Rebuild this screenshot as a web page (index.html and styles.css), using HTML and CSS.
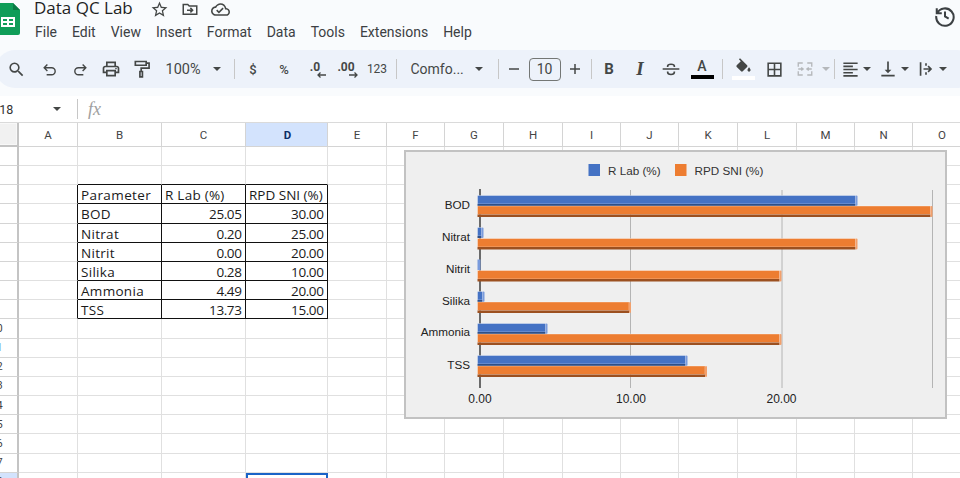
FILE: index.html
```html
<!DOCTYPE html>
<html lang="en">
<head>
<meta charset="utf-8">
<title>Data QC Lab</title>
<link rel="stylesheet" href="styles.css">
</head>
<body>
<div class="chrome">
  <header class="top">
    <svg class="logo" width="20" height="33" viewBox="0 3 20 33"><path class="logo-g" d="M0 3H13L20 10V33a2 2 0 0 1-2 2H0Z"/><path class="logo-f" d="M13 3L20 10H13Z"/><path class="logo-w" d="M1 17H15V27H1ZM3 19V21H7V19ZM9 19V21H13V19ZM3 23V25H7V23ZM9 23V25H13V23Z" fill-rule="evenodd"/></svg>
    <div class="heads">
      <div class="title-row">
        <span class="title">Data QC Lab</span>
        <svg class="ti star" width="19" height="19" viewBox="0 0 24 24"><path d="M22 9.24l-7.19-.62L12 2 9.19 8.63 2 9.24l5.46 4.73L5.82 21 12 17.27 18.18 21l-1.63-7.03L22 9.24zM12 15.4l-3.76 2.27 1-4.28-3.32-2.88 4.38-.38L12 6.1l1.71 4.04 4.38.38-3.32 2.88 1 4.28L12 15.4z"/></svg>
        <svg class="ti folder" width="18" height="18" viewBox="0 0 24 24"><path class="st" d="M3 6h6l2 2h10v11H3ZM8 13.500h7M12.500 10.500l3 3-3 3"/></svg>
        <svg class="ti cloud" width="19" height="19" viewBox="0 0 24 24"><path d="M19.35 10.040C18.670 6.590 15.640 4 12 4 9.110 4 6.600 5.640 5.350 8.040 2.340 8.360 0 10.910 0 14c0 3.310 2.690 6 6 6h13c2.760 0 5-2.240 5-5 0-2.640-2.050-4.780-4.650-4.960zM19 18H6c-2.210 0-4-1.790-4-4 0-2.050 1.530-3.760 3.560-3.970l1.070-.11.5-.95C8.080 7.140 9.940 6 12 6c2.620 0 4.880 1.860 5.390 4.430l.3 1.500 1.530.11c1.560.1 2.780 1.410 2.780 2.960 0 1.650-1.350 3-3 3zm-9-3.820l-2.090-2.090L6.500 13.500 10 17l6.010-6.010-1.410-1.410z"/></svg>
      </div>
      <nav class="menu">
        <span>File</span><span>Edit</span><span>View</span><span>Insert</span><span>Format</span><span>Data</span><span>Tools</span><span>Extensions</span><span>Help</span>
      </nav>
    </div>
    <svg class="history" width="22" height="22" viewBox="0 0 24 24"><path class="st thick" d="M3 3.500V9h5.500M3.400 9A9.500 9.500 0 1 1 2.500 12M12 7v5.500l4 2.400"/></svg>
  </header>

  <div class="toolbar">
    <button class="b first"><svg width="19" height="19" viewBox="0 0 24 24"><path d="M15.500 14h-.79l-.28-.27A6.471 6.471 0 0 0 16 9.500 6.500 6.500 0 1 0 9.500 16c1.610 0 3.090-.59 4.230-1.570l.27.28v.79l5 4.990L20.490 19l-4.990-5zm-6 0C7.010 14 5 11.990 5 9.500S7.010 5 9.500 5 14 7.010 14 9.500 11.990 14 9.500 14z"/></svg></button>
    <button class="b"><svg width="17" height="17" viewBox="0 0 24 24"><path class="st" d="M9 5L4.500 9.500 9 14M4.500 9.500H15a5 5 0 0 1 0 10H8"/></svg></button>
    <button class="b"><svg width="17" height="17" viewBox="0 0 24 24"><path class="st" d="M15 5l4.500 4.500L15 14M19.500 9.500H9a5 5 0 0 0 0 10h7"/></svg></button>
    <button class="b"><svg width="20" height="20" viewBox="0 0 24 24"><path d="M19 8h-1V3H6v5H5c-1.660 0-3 1.340-3 3v6h4v4h12v-4h4v-6c0-1.660-1.340-3-3-3zM8 5h8v3H8V5zm8 14H8v-4h8v4zm2-4v-2H6v2H4v-4c0-.55.45-1 1-1h14c.55 0 1 .45 1 1v4h-2z"/><circle cx="18" cy="11.500" r="1"/></svg></button>
    <button class="b"><svg width="20" height="20" viewBox="0 0 24 24"><path class="st" d="M4 3h13v4.500H4ZM17 5h3.500v6H11v4M9.500 15h3v6.500h-3Z"/></svg></button>
    <div class="dd zoom"><span>100%</span><i class="caret"></i></div>
    <i class="sep s1"></i>
    <button class="b t">$</button>
    <button class="b t">%</button>
    <button class="b dec"><span>.0</span><svg class="arr a0" width="9" height="6" viewBox="0 0 9 6"><path class="st thin" d="M9 3H1M3.500 .5L1 3 3.500 5.500"/></svg></button>
    <button class="b dec"><span>.00</span><svg class="arr a00" width="9" height="6" viewBox="0 0 9 6"><path class="st thin" d="M0 3H8M5.500 .5L8 3 5.500 5.500"/></svg></button>
    <button class="b t small">123</button>
    <i class="sep s2"></i>
    <div class="dd font"><span>Comfo...</span><i class="caret"></i></div>
    <i class="sep s3"></i>
    <button class="b minus"><svg width="14" height="14" viewBox="0 0 14 14"><path class="st mid" d="M2 7H12"/></svg></button>
    <div class="size">10</div>
    <button class="b plus"><svg width="14" height="14" viewBox="0 0 14 14"><path class="st mid" d="M2 7H12M7 2V12"/></svg></button>
    <i class="sep s4"></i>
    <button class="b bold">B</button>
    <button class="b ital">I</button>
    <button class="b"><svg width="20" height="20" viewBox="0 0 24 24"><path class="st" d="M2 12H22M8 9.500V8.500C8 5.500 16 5.500 16 8.500V9.500M8 15V16C8 19.500 16 19.500 16 16V15"/></svg></button>
    <button class="b color"><span>A</span><i class="bar"></i></button>
    <i class="sep s5"></i>
    <button class="b fill"><svg width="19" height="17" viewBox="0 0 24 21"><path d="M16.560 8.940L7.620 0 6.210 1.410l2.380 2.380-5.150 5.150c-.59.59-.59 1.540 0 2.120l5.500 5.500c.29.29.68.44 1.060.44s.77-.15 1.060-.44l5.500-5.500c.59-.58.59-1.530 0-2.120zM19 11.500s-2 2.170-2 3.500c0 1.100.9 2 2 2s2-.9 2-2c0-1.330-2-3.500-2-3.500z"/></svg><i class="bar white"></i></button>
    <button class="b"><svg width="19" height="19" viewBox="0 0 24 24"><path d="M3 3v18h18V3H3zm8 16H5v-6h6v6zm0-8H5V5h6v6zm8 8h-6v-6h6v6zm0-8h-6V5h6v6z"/></svg></button>
    <button class="b merge"><svg width="18" height="18" viewBox="0 0 24 24"><path class="st gray" d="M3 9V4H9M21 9V4H15M3 15V20H9M21 15V20H15M3 12H9M7 10L9.500 12 7 14M21 12H15M17 10L14.500 12 17 14"/></svg></button>
    <i class="caret light"></i>
    <i class="sep s6"></i>
    <div class="dd tool a1"><svg width="19" height="19" viewBox="0 0 24 24"><path d="M15 15H3v2h12v-2zm0-8H3v2h12V7zM3 13h18v-2H3v2zm0 8h18v-2H3v2zM3 3v2h18V3H3z"/></svg><i class="caret"></i></div>
    <div class="dd tool a2"><svg width="20" height="20" viewBox="0 0 24 24"><path d="M16 13h-3V3h-2v10H8l4 4 4-4zM4 19v2h16v-2H4z"/></svg><i class="caret"></i></div>
    <div class="dd tool a2"><svg width="20" height="20" viewBox="0 0 24 24"><path class="st" d="M5.500 4V20M9 12H18M14.500 8.500L18 12 14.500 15.500M12 5V8M12 16V19"/></svg><i class="caret"></i></div>
  </div>
</div>

<div class="formula">
  <div class="namebox"><span>D18</span><i class="caret"></i></div>
  <i class="sep fsep"></i>
  <span class="fx">fx</span>
</div>

<main class="sheet">
  <div class="h corner"></div><div class="h">A</div><div class="h">B</div><div class="h">C</div><div class="h on">D</div><div class="h">E</div><div class="h">F</div><div class="h">G</div><div class="h">H</div><div class="h">I</div><div class="h">J</div><div class="h">K</div><div class="h">L</div><div class="h">M</div><div class="h">N</div><div class="h">O</div>

  <div class="r">1</div><div class="c"></div><div class="c"></div><div class="c"></div><div class="c"></div><div class="c"></div><div class="c"></div><div class="c"></div><div class="c"></div><div class="c"></div><div class="c"></div><div class="c"></div><div class="c"></div><div class="c"></div><div class="c"></div><div class="c"></div>
  <div class="r">2</div><div class="c"></div><div class="c bb"></div><div class="c bb"></div><div class="c bb"></div><div class="c"></div><div class="c"></div><div class="c"></div><div class="c"></div><div class="c"></div><div class="c"></div><div class="c"></div><div class="c"></div><div class="c"></div><div class="c"></div><div class="c"></div>
  <div class="r">3</div><div class="c br"></div><div class="c k hd">Parameter</div><div class="c k hd hd2">R Lab (%)</div><div class="c k hd hd3">RPD SNI (%)</div><div class="c"></div><div class="c"></div><div class="c"></div><div class="c"></div><div class="c"></div><div class="c"></div><div class="c"></div><div class="c"></div><div class="c"></div><div class="c"></div><div class="c"></div>
  <div class="r">4</div><div class="c br"></div><div class="c k">BOD</div><div class="c k n">25.05</div><div class="c k n">30.00</div><div class="c"></div><div class="c"></div><div class="c"></div><div class="c"></div><div class="c"></div><div class="c"></div><div class="c"></div><div class="c"></div><div class="c"></div><div class="c"></div><div class="c"></div>
  <div class="r">5</div><div class="c br"></div><div class="c k">Nitrat</div><div class="c k n">0.20</div><div class="c k n">25.00</div><div class="c"></div><div class="c"></div><div class="c"></div><div class="c"></div><div class="c"></div><div class="c"></div><div class="c"></div><div class="c"></div><div class="c"></div><div class="c"></div><div class="c"></div>
  <div class="r">6</div><div class="c br"></div><div class="c k">Nitrit</div><div class="c k n">0.00</div><div class="c k n">20.00</div><div class="c"></div><div class="c"></div><div class="c"></div><div class="c"></div><div class="c"></div><div class="c"></div><div class="c"></div><div class="c"></div><div class="c"></div><div class="c"></div><div class="c"></div>
  <div class="r">7</div><div class="c br"></div><div class="c k">Silika</div><div class="c k n">0.28</div><div class="c k n">10.00</div><div class="c"></div><div class="c"></div><div class="c"></div><div class="c"></div><div class="c"></div><div class="c"></div><div class="c"></div><div class="c"></div><div class="c"></div><div class="c"></div><div class="c"></div>
  <div class="r">8</div><div class="c br"></div><div class="c k">Ammonia</div><div class="c k n">4.49</div><div class="c k n">20.00</div><div class="c"></div><div class="c"></div><div class="c"></div><div class="c"></div><div class="c"></div><div class="c"></div><div class="c"></div><div class="c"></div><div class="c"></div><div class="c"></div><div class="c"></div>
  <div class="r">9</div><div class="c br"></div><div class="c k">TSS</div><div class="c k n">13.73</div><div class="c k n">15.00</div><div class="c"></div><div class="c"></div><div class="c"></div><div class="c"></div><div class="c"></div><div class="c"></div><div class="c"></div><div class="c"></div><div class="c"></div><div class="c"></div><div class="c"></div>
  <div class="r">10</div><div class="c"></div><div class="c"></div><div class="c"></div><div class="c"></div><div class="c"></div><div class="c"></div><div class="c"></div><div class="c"></div><div class="c"></div><div class="c"></div><div class="c"></div><div class="c"></div><div class="c"></div><div class="c"></div><div class="c"></div>
  <div class="r blue">11</div><div class="c"></div><div class="c"></div><div class="c"></div><div class="c"></div><div class="c"></div><div class="c"></div><div class="c"></div><div class="c"></div><div class="c"></div><div class="c"></div><div class="c"></div><div class="c"></div><div class="c"></div><div class="c"></div><div class="c"></div>
  <div class="r">12</div><div class="c"></div><div class="c"></div><div class="c"></div><div class="c"></div><div class="c"></div><div class="c"></div><div class="c"></div><div class="c"></div><div class="c"></div><div class="c"></div><div class="c"></div><div class="c"></div><div class="c"></div><div class="c"></div><div class="c"></div>
  <div class="r">13</div><div class="c"></div><div class="c"></div><div class="c"></div><div class="c"></div><div class="c"></div><div class="c"></div><div class="c"></div><div class="c"></div><div class="c"></div><div class="c"></div><div class="c"></div><div class="c"></div><div class="c"></div><div class="c"></div><div class="c"></div>
  <div class="r">14</div><div class="c"></div><div class="c"></div><div class="c"></div><div class="c"></div><div class="c"></div><div class="c"></div><div class="c"></div><div class="c"></div><div class="c"></div><div class="c"></div><div class="c"></div><div class="c"></div><div class="c"></div><div class="c"></div><div class="c"></div>
  <div class="r">15</div><div class="c"></div><div class="c"></div><div class="c"></div><div class="c"></div><div class="c"></div><div class="c"></div><div class="c"></div><div class="c"></div><div class="c"></div><div class="c"></div><div class="c"></div><div class="c"></div><div class="c"></div><div class="c"></div><div class="c"></div>
  <div class="r">16</div><div class="c"></div><div class="c"></div><div class="c"></div><div class="c"></div><div class="c"></div><div class="c"></div><div class="c"></div><div class="c"></div><div class="c"></div><div class="c"></div><div class="c"></div><div class="c"></div><div class="c"></div><div class="c"></div><div class="c"></div>
  <div class="r">17</div><div class="c"></div><div class="c"></div><div class="c"></div><div class="c"></div><div class="c"></div><div class="c"></div><div class="c"></div><div class="c"></div><div class="c"></div><div class="c"></div><div class="c"></div><div class="c"></div><div class="c"></div><div class="c"></div><div class="c"></div>
  <div class="r on">18</div><div class="c"></div><div class="c"></div><div class="c"></div><div class="c sel"></div><div class="c"></div><div class="c"></div><div class="c"></div><div class="c"></div><div class="c"></div><div class="c"></div><div class="c"></div><div class="c"></div><div class="c"></div><div class="c"></div><div class="c"></div>

  <svg class="chart" width="544" height="270" viewBox="404 150 544 270">
    <rect class="frame" x="405" y="151" width="541" height="267"/>
    <path class="gridl" d="M630.500 190V388M782 190V388M932.500 190V388"/>
    <path class="axis" d="M480 189V388"/>

    <rect class="sq-b" x="588.500" y="164" width="11.500" height="12"/>
    <text class="lbl" x="608" y="175">R Lab (%)</text>
    <rect class="sq-o" x="675" y="164" width="11.500" height="12"/>
    <text class="lbl" x="694.500" y="175">RPD SNI (%)</text>

    <g class="cat">
      <text x="470" y="209">BOD</text>
      <text x="470" y="241">Nitrat</text>
      <text x="470" y="273">Nitrit</text>
      <text x="470" y="305">Silika</text>
      <text x="470" y="336">Ammonia</text>
      <text x="470" y="369">TSS</text>
    </g>
    <g class="val">
      <text x="480" y="403">0.00</text>
      <text x="631" y="403">10.00</text>
      <text x="781.500" y="403">20.00</text>
    </g>

    <g>
      <rect class="m-b" x="477.500" y="195.500" width="378" height="8.500"/><rect class="d-b" x="477.500" y="204" width="378" height="2"/><rect class="c-b" x="855.500" y="195.500" width="2" height="10.500" rx="1"/>
      <rect class="m-o" x="477.500" y="206" width="453" height="8.500"/><rect class="d-o" x="477.500" y="214.500" width="453" height="2.500"/><rect class="c-o" x="930.500" y="206" width="2" height="11" rx="1"/>

      <rect class="m-b" x="477.500" y="227.500" width="4" height="8.500"/><rect class="d-b" x="477.500" y="236" width="4" height="2"/><rect class="c-b" x="481.500" y="227.500" width="2" height="10.500" rx="1"/>
      <rect class="m-o" x="477.500" y="238.500" width="378" height="8.500"/><rect class="d-o" x="477.500" y="247" width="378" height="2.500"/><rect class="c-o" x="855.500" y="238.500" width="2" height="11" rx="1"/>

      <rect class="c-b" x="477.500" y="259.500" width="3" height="10.500"/>
      <rect class="m-o" x="477.500" y="270.500" width="302" height="8.500"/><rect class="d-o" x="477.500" y="279" width="302" height="2.500"/><rect class="c-o" x="779.500" y="270.500" width="2" height="11" rx="1"/>

      <rect class="m-b" x="477.500" y="291.500" width="5" height="8.500"/><rect class="d-b" x="477.500" y="300" width="5" height="2"/><rect class="c-b" x="482.500" y="291.500" width="2" height="10.500" rx="1"/>
      <rect class="m-o" x="477.500" y="302" width="151.500" height="8.500"/><rect class="d-o" x="477.500" y="310.500" width="151.500" height="2.500"/><rect class="c-o" x="629" y="302" width="2" height="11" rx="1"/>

      <rect class="m-b" x="477.500" y="323.500" width="68" height="8.500"/><rect class="d-b" x="477.500" y="332" width="68" height="2"/><rect class="c-b" x="545.500" y="323.500" width="2" height="10.500" rx="1"/>
      <rect class="m-o" x="477.500" y="334" width="302" height="8.500"/><rect class="d-o" x="477.500" y="342.500" width="302" height="2.500"/><rect class="c-o" x="779.500" y="334" width="2" height="11" rx="1"/>

      <rect class="m-b" x="477.500" y="355.500" width="208" height="8.500"/><rect class="d-b" x="477.500" y="364" width="208" height="2"/><rect class="c-b" x="685.500" y="355.500" width="2" height="10.500" rx="1"/>
      <rect class="m-o" x="477.500" y="366" width="227.500" height="8.500"/><rect class="d-o" x="477.500" y="374.500" width="227.500" height="2.500"/><rect class="c-o" x="705" y="366" width="2" height="11" rx="1"/>
    </g>
  </svg>
</main>
</body>
</html>
```

FILE: styles.css
```css
* { box-sizing: border-box; }

html, body {
  margin: 0;
  width: 960px;
  height: 478px;
  overflow: hidden;
  background: #fff;
  font-family: Roboto, "Liberation Sans", sans-serif;
  color: #444746;
}

svg { display: block; fill: #444746; flex: none; }
.st { fill: none; stroke: #444746; stroke-width: 2; }
.st.thick { stroke-width: 2.2; stroke: #3c4043; }
.st.gray { stroke: #b5b8bb; stroke-width: 1.8; }
.st.thin { stroke-width: 1.3; }
.st.mid { stroke-width: 1.5; }

/* window chrome */
.chrome { height: 96px; background: #f9fbfd; }

.top { display: flex; height: 50px; position: relative; }
.logo { margin-top: 3px; }
.logo-g { fill: #0f9d58; }
.logo-f { fill: #0b7a45; }
.logo-w { fill: #fff; }

.heads { margin-left: 14px; }
.title-row { display: flex; align-items: center; height: 18px; }
.title { font-family: "Open Sans", sans-serif; font-size: 17px; line-height: 18px; color: #1f1f1f; margin-top: -2px; width: 116px; }
.ti { margin-right: 12px; }

.menu { display: flex; gap: 15px; margin-top: 5px; margin-left: 1px; font-size: 14px; line-height: 18px; color: #3c4043; }

.history { position: absolute; left: 934px; top: 5px; }

/* toolbar */
.toolbar {
  display: flex;
  align-items: center;
  height: 38px;
  width: 980px;
  margin-left: -4px;
  padding-left: 4.5px;
  border-radius: 19px;
  background: #edf2fa;
}
.b {
  display: flex; flex-direction: column; align-items: center; justify-content: center;
  flex: none; width: 31px; height: 28px; padding: 0; border: 0; background: none;
  font-family: Roboto, sans-serif; color: #444746; font-size: 14px;
}
.first { margin-right: 2px; }
.t { font-size: 13px; font-weight: 500; }
.t.small { font-size: 12px; font-weight: 400; }
.caret { display: block; flex: none; width: 0; height: 0; border: 4px solid transparent; border-bottom-width: 0; border-top: 4.5px solid #444746; }
.caret.light { border-top-color: #b5b8bb; margin-left: 1px; }
.dd { display: flex; align-items: center; flex: none; font-size: 14.500px; }
.zoom { width: 68px; padding: 0 4.500px 0 8px; justify-content: space-between; }
.font { width: 92px; padding: 0 6px 0 14px; justify-content: space-between; font-size: 14px; }
.sep { display: block; flex: none; width: 1px; height: 20px; background: #c7c7c7; }
.s1 { margin: 0 3px 0 8px; }
.s2 { margin-left: 3px; }
.s3 { margin-left: 9px; }
.s4 { margin-left: 1px; }
.s5 { margin: 0 5px 0 4px; }
.s6 { margin-left: 4px; }
.dec { font-size: 12px; font-weight: 700; line-height: 11px; padding-top: 1px; }
.arr { margin-top: -1px; }
.a0 { margin-left: 12px; }
.a00 { margin-left: 15px; }
.minus { width: 30px; }
.plus { width: 29px; }
.size { flex: none; width: 32px; height: 23px; border: 1.5px solid #747775; border-radius: 4px; font-size: 14px; line-height: 20px; text-align: center; }
.bold { font-size: 15px; font-weight: 700; margin-left: 2px; }
.ital { font-family: "Liberation Serif", serif; font-size: 19px; font-style: italic; font-weight: 700; }
.color { font-size: 14px; line-height: 14px; font-weight: 500; }
.bar { display: block; width: 23px; height: 3.5px; background: #000; margin-top: 2px; }
.bar.white { background: #fff; margin-top: 1px; }
.tool { gap: 3px; }
.a1 { margin-left: 6.500px; }
.a2 { margin-left: 7px; }

/* formula bar */
.formula { display: flex; align-items: center; height: 27px; background: #fff; border-bottom: 1px solid #dadada; }
.namebox { display: flex; align-items: center; justify-content: space-between; width: 75px; margin-left: -9px; padding-right: 5px; font-size: 12.500px; color: #333; }
.fsep { margin-left: 11px; }
.fx { margin-left: 10px; font-family: "Liberation Serif", serif; font-style: italic; font-size: 18px; color: #a0a0a0; }

/* grid */
.sheet {
  position: relative;
  display: grid;
  width: 1010px;
  margin-left: -28px;
  grid-template-columns: 47px 59px 84px 84px 82px 59px 58px 59px 59px 58px 58px 59px 59px 58px 58px 59px;
  grid-template-rows: 24px repeat(18, 19.170px);
  font-size: 11px;
}
.h { display: flex; align-items: center; justify-content: center; border-right: 1px solid #d4d4d4; border-bottom: 1px solid #d4d4d4; color: #444; font-size: 11.500px; }
.h.on { background: #d3e3fd; color: #0b2e66; font-weight: 700; padding-left: 2px; }
.corner { background: #f1f1f1; border-right: 2px solid #c4c4c4; border-bottom: 2px solid #c4c4c4; box-shadow: inset 0 0 0 1px #f8f8f8; }
.r { display: flex; align-items: center; justify-content: center; padding-left: 4px; border-right: 2px solid #c4c4c4; border-bottom: 1px solid #d4d4d4; color: #444; font-size: 11px; }
.r.blue { color: #78aee8; }
.r.on { background: #d3e3fd; }
.c { border-right: 1px solid #e0e0e0; border-bottom: 1px solid #e0e0e0; overflow: hidden; white-space: nowrap; }
.bb { border-bottom-color: #111; }
.br { border-right-color: #111; }
.k { border-right-color: #111; border-bottom-color: #111; padding-left: 3px; font-family: "Open Sans", sans-serif; font-size: 13.500px; line-height: 20px; letter-spacing: .3px; color: #1a1a1a; }
.hd { letter-spacing: .4px; }
.hd2 { letter-spacing: .25px; }
.hd3 { letter-spacing: 0; }
.n { text-align: right; padding: 0 3.500px 0 0; letter-spacing: -.4px; }
.sel { border: 2px solid #1a63c7; border-bottom: 0; }

/* chart */
.chart { position: absolute; left: 432px; top: 27px; font-family: "Liberation Sans", sans-serif; }
.frame { fill: #efefef; stroke: #c2c2c2; stroke-width: 2; }
.gridl { fill: none; stroke: #b4b4b4; stroke-width: 1; }
.axis { fill: none; stroke: #6a6a6a; stroke-width: 2; }
.lbl { font-size: 11.700px; fill: #333; }
.sq-b { fill: #4472c4; }
.sq-o { fill: #ed7d31; }
.cat text { font-size: 11.700px; fill: #222; text-anchor: end; }
.val text { font-size: 12px; fill: #222; text-anchor: middle; }
.m-b { fill: #4472c4; stroke: #fff; stroke-opacity: .35; stroke-width: 1; }
.d-b { fill: #2f4f87; }
.c-b { fill: #7a9bdc; }
.m-o { fill: #ed7d31; stroke: #fff; stroke-opacity: .35; stroke-width: 1; }
.d-o { fill: #9c5020; }
.c-o { fill: #f2a06c; }
```
